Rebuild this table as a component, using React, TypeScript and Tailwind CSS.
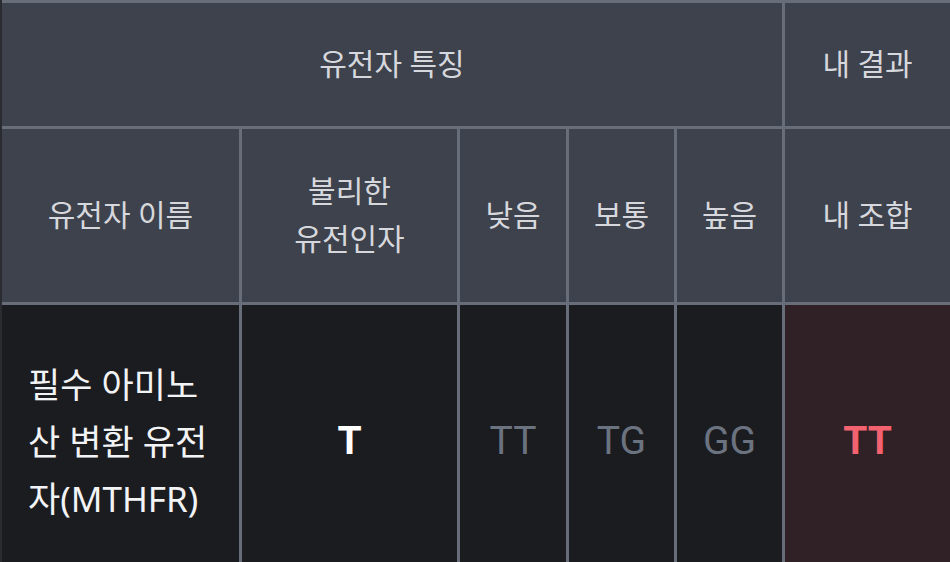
import React from "react";

const font = { fontFamily: 'Roboto, "Noto Sans CJK KR", "Noto Sans", sans-serif' };
const nameFont = { fontFamily: '"Noto Sans", "Noto Sans CJK KR", sans-serif' };

export default function App() {
  const head = "bg-[#3e424c] text-[#d6d8dd] flex items-center justify-center text-center text-[30px] leading-[48px]";
  const body = "bg-[#1b1c20] flex items-center justify-center text-[39px]";
  return (
    <div className="w-[950px] h-[562px] overflow-hidden bg-[#1b1c20]" style={font}>
      <div className="grid grid-cols-[237px_215px_106px_105px_105px_1fr] grid-rows-[123px_173px_272px] gap-[3px] bg-[#676e7a] pt-[3px] border-l-2 border-[#2a2c31]">
        <div className={`${head} col-span-5`}>유전자 특징</div>
        <div className={head}>내 결과</div>

        <div className={head}>유전자 이름</div>
        <div className={head}>
          불리한
          <br />
          유전인자
        </div>
        <div className={head}>낮음</div>
        <div className={head}>보통</div>
        <div className={head}>높음</div>
        <div className={head}>내 조합</div>

        <div className="bg-[#1b1c20] flex items-center pl-[26px] text-[35px] leading-[57px] text-[#f2f3f5]" style={nameFont}>
          <div>
            필수 아미노
            <br />
            산 변환 유전
            <br />
            자(MTHFR)
          </div>
        </div>
        <div className={`${body} text-white font-bold`}>T</div>
        <div className={`${body} text-[#6c7380]`}>TT</div>
        <div className={`${body} text-[#6c7380]`}>TG</div>
        <div className={`${body} text-[#6c7380]`}>GG</div>
        <div className="bg-[#2f2126] flex items-center justify-center text-[39px] font-bold text-[#f2626f]">TT</div>
      </div>
    </div>
  );
}
